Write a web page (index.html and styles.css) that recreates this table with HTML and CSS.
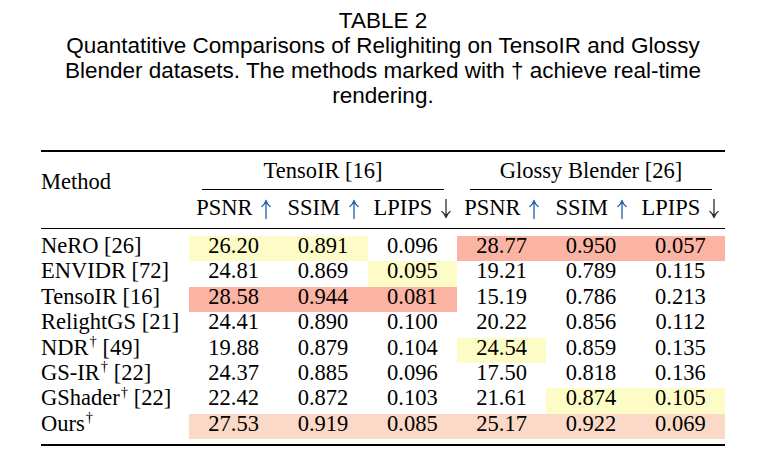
FILE: index.html
```html
<!DOCTYPE html>
<html lang="en">
<head>
<meta charset="utf-8">
<title>Table 2</title>
<link rel="stylesheet" href="styles.css">
</head>
<body>
<div class="page">
  <div class="caption">
    <div class="caption-label">TABLE 2</div>
    <div class="caption-text">Quantatitive Comparisons of Relighiting on TensoIR and Glossy<br>Blender datasets. The methods marked with † achieve real-time<br>rendering.</div>
  </div>
  <table class="results">
    <colgroup>
      <col class="col-method">
      <col class="col-num"><col class="col-num"><col class="col-num">
      <col class="col-num"><col class="col-num"><col class="col-num">
    </colgroup>
    <thead>
      <tr class="group-row">
        <th class="method-head" rowspan="2">Method</th>
        <th colspan="3"><div class="cmid">TensoIR [16]</div></th>
        <th colspan="3"><div class="cmid">Glossy Blender [26]</div></th>
      </tr>
      <tr class="metric-row">
        <th>PSNR <svg class="arrow up" viewBox="0 0 10 20" aria-label="↑"><path d="M5 1.5V20M1 7.5C3 6 4.2 4 5 1.5C5.8 4 7 6 9 7.5"/></svg></th>
        <th>SSIM <svg class="arrow up" viewBox="0 0 10 20" aria-label="↑"><path d="M5 1.5V20M1 7.5C3 6 4.2 4 5 1.5C5.8 4 7 6 9 7.5"/></svg></th>
        <th>LPIPS <svg class="arrow down" viewBox="0 0 10 20" aria-label="↓"><path d="M5 0V18.5M1 12.5C3 14 4.2 16 5 18.5C5.8 16 7 14 9 12.5"/></svg></th>
        <th>PSNR <svg class="arrow up" viewBox="0 0 10 20" aria-label="↑"><path d="M5 1.5V20M1 7.5C3 6 4.2 4 5 1.5C5.8 4 7 6 9 7.5"/></svg></th>
        <th>SSIM <svg class="arrow up" viewBox="0 0 10 20" aria-label="↑"><path d="M5 1.5V20M1 7.5C3 6 4.2 4 5 1.5C5.8 4 7 6 9 7.5"/></svg></th>
        <th>LPIPS <svg class="arrow down" viewBox="0 0 10 20" aria-label="↓"><path d="M5 0V18.5M1 12.5C3 14 4.2 16 5 18.5C5.8 16 7 14 9 12.5"/></svg></th>
      </tr>
    </thead>
    <tbody>
      <tr>
        <td>NeRO [26]</td>
        <td class="second">26.20</td><td class="second">0.891</td><td>0.096</td>
        <td class="best">28.77</td><td class="best">0.950</td><td class="best">0.057</td>
      </tr>
      <tr>
        <td>ENVIDR [72]</td>
        <td>24.81</td><td>0.869</td><td class="second">0.095</td>
        <td>19.21</td><td>0.789</td><td>0.115</td>
      </tr>
      <tr>
        <td>TensoIR [16]</td>
        <td class="best">28.58</td><td class="best">0.944</td><td class="best">0.081</td>
        <td>15.19</td><td>0.786</td><td>0.213</td>
      </tr>
      <tr>
        <td>RelightGS [21]</td>
        <td>24.41</td><td>0.890</td><td>0.100</td>
        <td>20.22</td><td>0.856</td><td>0.112</td>
      </tr>
      <tr>
        <td>NDR<sup>†</sup> [49]</td>
        <td>19.88</td><td>0.879</td><td>0.104</td>
        <td class="second">24.54</td><td>0.859</td><td>0.135</td>
      </tr>
      <tr>
        <td>GS-IR<sup>†</sup> [22]</td>
        <td>24.37</td><td>0.885</td><td>0.096</td>
        <td>17.50</td><td>0.818</td><td>0.136</td>
      </tr>
      <tr>
        <td>GShader<sup>†</sup> [22]</td>
        <td>22.42</td><td>0.872</td><td>0.103</td>
        <td>21.61</td><td class="second">0.874</td><td class="second">0.105</td>
      </tr>
      <tr class="ours">
        <td>Ours<sup>†</sup></td>
        <td class="third">27.53</td><td class="third">0.919</td><td class="third">0.085</td>
        <td class="third">25.17</td><td class="third">0.922</td><td class="third">0.069</td>
      </tr>
    </tbody>
  </table>
</div>
</body>
</html>
```

FILE: styles.css
```css
html, body {
  margin: 0;
  padding: 0;
  background: #ffffff;
  color: #000000;
}

.page {
  width: 684px;
  margin-left: 41px;
  padding-top: 8px;
}

.caption {
  font-family: "Liberation Sans", Arial, sans-serif;
  font-size: 22.5px;
  line-height: 25px;
  text-align: center;
  white-space: nowrap;
}

.results {
  margin-top: 42px;
  width: 684px;
  table-layout: fixed;
  border-collapse: separate;
  border-spacing: 0;
  border-top: 2px solid #000;
  border-bottom: 2px solid #000;
  font-family: "Liberation Serif", "Times New Roman", serif;
  font-size: 22.5px;
  color: #000;
}

.col-method { width: 148px; }
.col-num { width: 89.33px; }

.results th {
  font-weight: normal;
  padding: 0;
  text-align: center;
  white-space: nowrap;
}

.results th.method-head {
  text-align: left;
  vertical-align: top;
  padding-top: 17px;
  line-height: 25px;
  border-bottom: 1px solid #000;
}

.group-row th {
  vertical-align: bottom;
}

.cmid {
  margin: 0 13px;
  line-height: 37px;
  border-bottom: 1px solid #000;
}

.metric-row th {
  line-height: 35px;
  padding-bottom: 3px;
  border-bottom: 1px solid #000;
}

.arrow {
  width: 10px;
  height: 20px;
  margin-left: 3px;
  vertical-align: -4px;
  fill: none;
  stroke-width: 1.3;
  stroke-linecap: round;
  stroke-linejoin: round;
}

.arrow.up { stroke: #1f5ea8; }
.arrow.down { stroke: #3a2a2a; }

.results td {
  padding: 0 0 5.4px 0;
  line-height: 20px;
  text-align: center;
  white-space: nowrap;
  background-clip: padding-box;
}

.results td:first-child {
  text-align: left;
}

.results tbody tr:first-child td {
  border-top: 7px solid transparent;
}

.results tbody tr:last-child td {
  border-bottom: 5px solid transparent;
}

.results sup {
  font-size: 0.65em;
  line-height: 0;
  vertical-align: 0.6em;
  margin-left: 1px;
}

.best { background-color: #fbb4a3; }
.second { background-color: #fdfcc7; }
.third { background-color: #fcd9c6; }
```
